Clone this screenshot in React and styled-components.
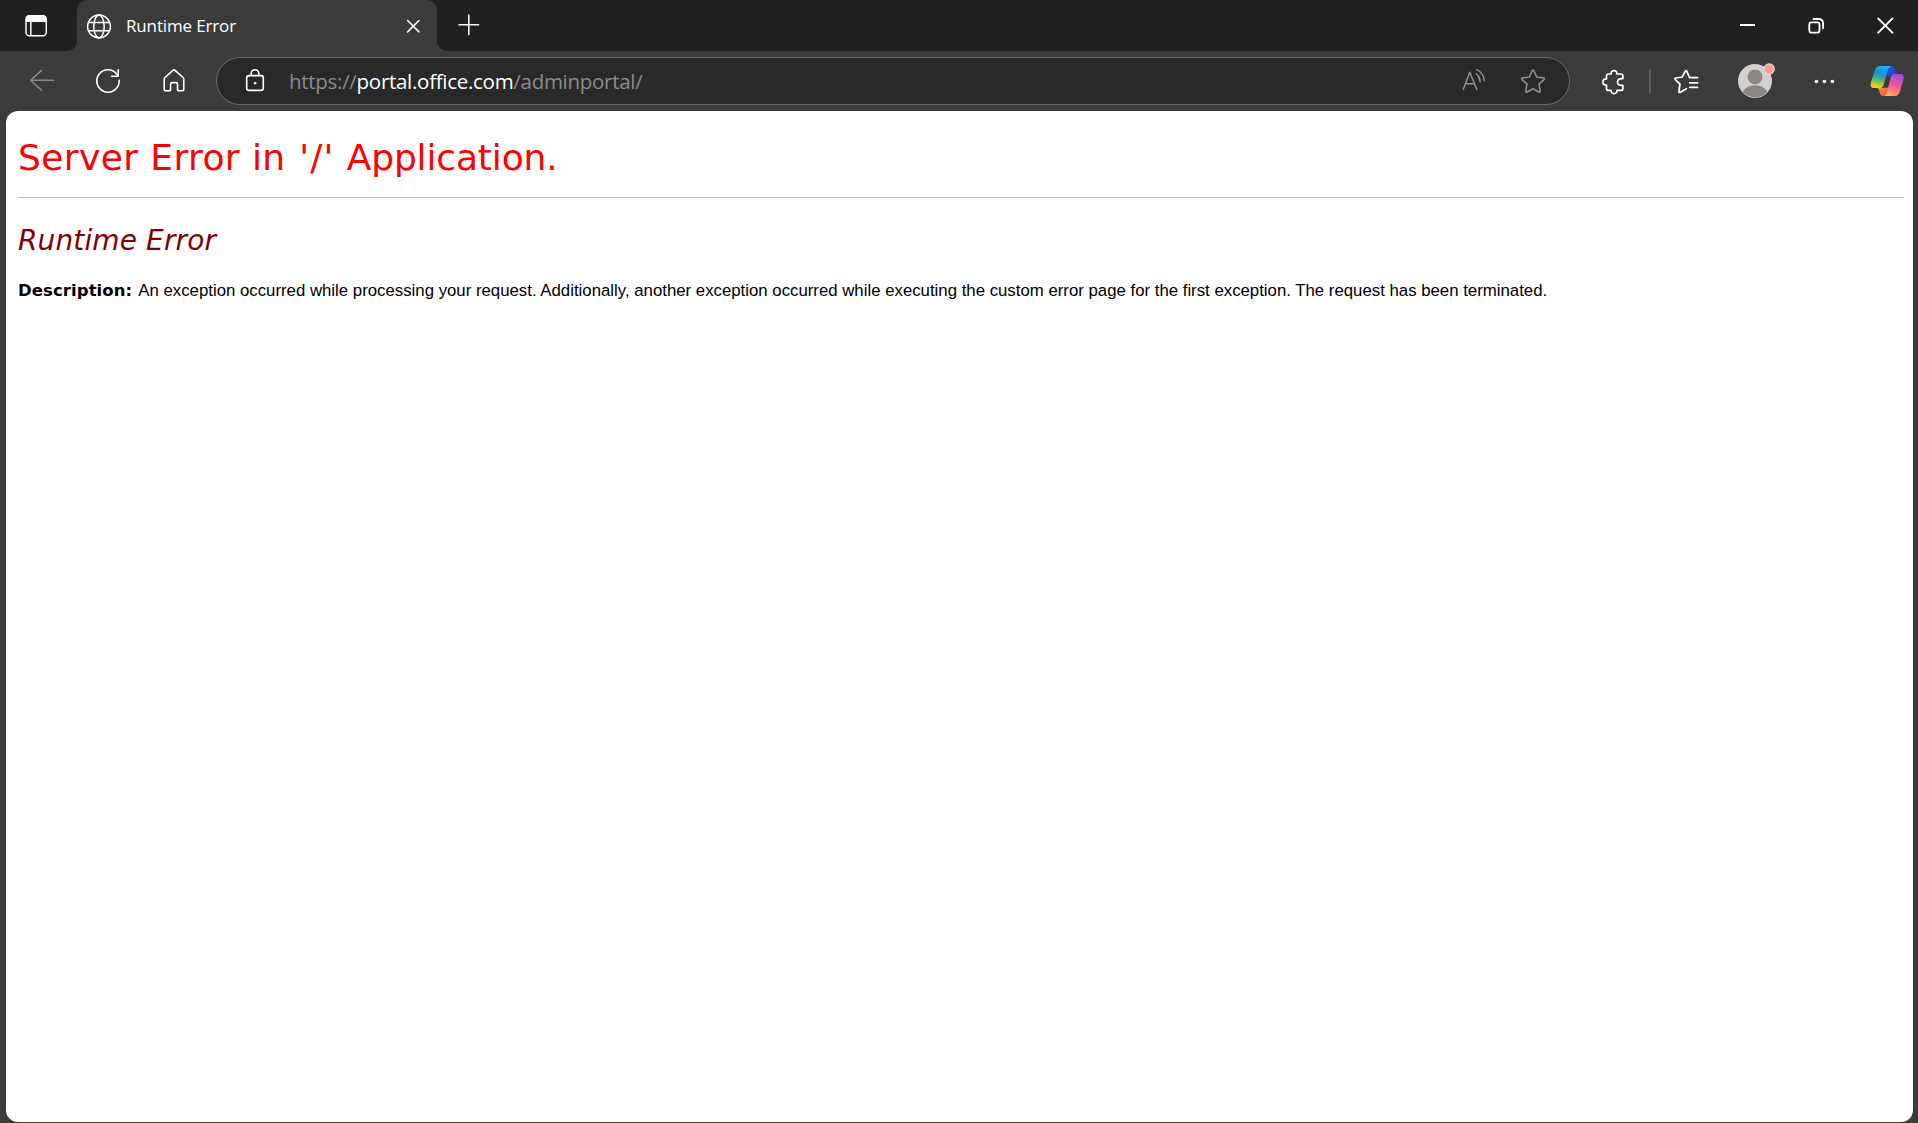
import React from "react";
import styled, { createGlobalStyle } from "styled-components";

const GlobalStyle = createGlobalStyle`
  html, body, #root { height: 100%; }
  body { margin: 0; background: #3b3b3b; overflow: hidden; }
  * { box-sizing: border-box; }
`;

const Window = styled.div`
  height: 100vh;
  display: flex;
  flex-direction: column;
  background: #3b3b3b;
  font-family: "Open Sans", "Noto Sans", sans-serif;
`;

const TabStrip = styled.header`
  height: 51px;
  flex: none;
  display: flex;
  align-items: flex-start;
  background: #202020;
`;

const StripStart = styled.div`
  width: 77px;
  height: 51px;
  padding: 11px 0 0 22px;
  background: #202020;
  border-bottom-right-radius: 10px;
`;

const TabBase = styled.div`
  display: flex;
  background: #3b3b3b;
`;

const Tab = styled.div`
  width: 360px;
  height: 51px;
  display: flex;
  align-items: center;
  padding: 0 15px 0 8px;
  background: #3b3b3b;
  border-radius: 10px 10px 0 0;
`;

const TabCorners = styled.div`
  background: linear-gradient(#202020 50%, #3b3b3b 50%);
`;

const TabTitle = styled.span`
  flex: 1;
  margin-left: 13px;
  color: #fff;
  font-size: 17px;
  line-height: 24px;
  letter-spacing: -0.15px;
  white-space: nowrap;
`;

const StripEnd = styled.div`
  flex: 1;
  height: 51px;
  display: flex;
  justify-content: space-between;
  padding: 10px 18px 0 16px;
  background: #202020;
  border-bottom-left-radius: 10px;
`;

const StripEndBase = styled.div`
  flex: 1;
  display: flex;
  background: #3b3b3b;
`;

const WindowControls = styled.div`
  display: flex;
  gap: 39px;
`;

const Toolbar = styled.nav`
  height: 60px;
  flex: none;
  display: flex;
  align-items: center;
  padding: 0 12px 0 28px;
`;

const NavButtons = styled.div`
  display: flex;
  gap: 38px;
  margin-right: 28px;
`;

const AddressBar = styled.div`
  flex: none;
  width: 1354px;
  height: 48px;
  display: flex;
  align-items: center;
  padding: 0 22px 0 24px;
  border: 1.5px solid #6a6a6a;
  border-radius: 24px;
  background: #292929;
`;

const Url = styled.span`
  flex: 1;
  margin-left: 20px;
  color: #8c8c8c;
  font-size: 20.5px;
  line-height: 30px;
  letter-spacing: -0.29px;
  font-variant-ligatures: none;
  white-space: nowrap;
`;

const UrlHost = styled.span`
  color: #fff;
`;

const AddressActions = styled.div`
  display: flex;
  gap: 31px;
`;

const Extras = styled.div`
  flex: 1;
  display: flex;
  align-items: center;
  margin-left: 29px;
`;

const Divider = styled.span`
  width: 2px;
  height: 24px;
  margin: 0 21px 0 22px;
  background: #5e5e5e;
`;

const Glyph = styled.svg`
  display: block;
  flex: none;
  margin-left: ${(p) => p.$gap || 0}px;
  fill: none;
  stroke: ${(p) => p.$color || "#fff"};
  stroke-width: ${(p) => p.$weight || 1.5};
  stroke-linecap: round;
  stroke-linejoin: round;
`;

const Icon = ({ w = 28, h = 30, children, ...rest }) => (
  <Glyph width={w} height={h} viewBox={`0 0 ${w} ${h}`} {...rest}>
    {children}
  </Glyph>
);

const Page = styled.main`
  flex: 1;
  margin: 0 5px 1px 6px;
  padding: 0 9px 0 12px;
  background: #fff;
  border-radius: 12px;
  color: #000;
`;

const ErrorTitle = styled.h1`
  margin: 0;
  padding-top: 25px;
  height: 87px;
  border-bottom: 1px solid #bdbdbd;
  color: #f00;
  font: 400 36px/44px Verdana, "DejaVu Sans", sans-serif;
  letter-spacing: 0.4px;
`;

const Tracked = styled.span`
  margin-left: ${(p) => p.$shift || 0}px;
  letter-spacing: ${(p) => p.$by}px;
`;

const ErrorKind = styled.h2`
  margin: 25px 0 0;
  color: maroon;
  font: italic 400 28px/36px Verdana, "DejaVu Sans", sans-serif;
  letter-spacing: 0.12px;
`;

const Description = styled.p`
  margin: 20px 0 0;
  font: 16.8px/24px Arial, "Liberation Sans", sans-serif;
  white-space: nowrap;
`;

const Label = styled.b`
  margin-right: 6px;
  font: 700 16.5px/24px Verdana, "DejaVu Sans", sans-serif;
  letter-spacing: 0.08px;
`;

const CopilotLogo = () => (
  <Icon w={38} $gap={30} stroke="none">
    <defs>
      <linearGradient id="cpLeft" x1="0.6" y1="0" x2="0.35" y2="1">
        <stop offset="0" stopColor="#1fb0f5" />
        <stop offset="0.35" stopColor="#1690dc" />
        <stop offset="0.6" stopColor="#3fae7c" />
        <stop offset="0.82" stopColor="#b5c830" />
        <stop offset="1" stopColor="#f6cf10" />
      </linearGradient>
      <linearGradient id="cpTop" x1="0" y1="0" x2="1" y2="1">
        <stop offset="0" stopColor="#1a62e0" />
        <stop offset="1" stopColor="#1d3fc4" />
      </linearGradient>
      <linearGradient id="cpRight" x1="0.7" y1="0" x2="0.35" y2="1">
        <stop offset="0" stopColor="#a14bea" />
        <stop offset="0.45" stopColor="#e9539f" />
        <stop offset="0.75" stopColor="#fb7a78" />
        <stop offset="1" stopColor="#fdb25e" />
      </linearGradient>
      <linearGradient id="cpLow" x1="0" y1="0" x2="1" y2="1">
        <stop offset="0" stopColor="#f9a03c" />
        <stop offset="1" stopColor="#f0453f" />
      </linearGradient>
    </defs>
    <g stroke="none">
      <path fill="url(#cpTop)" d="M18 0H23.5Q26 0 26.8 2.6L28 6.5Q28.5 8 30 8H25Q22 8 21 10.5L18 8.6Z" />
      <path fill="url(#cpLow)" d="M20.5 21.5L19.5 30H15.5Q12.6 30 11.9 27.5L11 24Q10.5 22 8.5 22H14Z" />
      <path fill="url(#cpLeft)" d="M12.5 0H23.5Q21 .5 20 3.5L15.6 19Q14.7 22 12 22H6Q1.8 22 2.8 17L6.5 5Q8 0 12.5 0Z" />
      <path fill="url(#cpRight)" d="M26 8H32.5Q36.5 8 35.6 13L31.9 25.5Q30.6 30 26.5 30H16Q18 29.5 18.8 26.5L22.8 11Q23.6 8 26 8Z" />
    </g>
  </Icon>
);

export default function App() {
  return (
    <Window>
      <GlobalStyle />
      <TabStrip>
        <TabBase>
          <StripStart>
            <Icon w={28} h={28}>
              <rect x="4" y="4.8" width="20.3" height="20" rx="3.6" />
              <path d="M4.2 8.5Q4.2 5 7.7 5H20.6Q24.1 5 24.1 8.5V10.2H4.2Z" fill="#fff" />
              <path d="M8.8 10V24.6" />
            </Icon>
          </StripStart>
        </TabBase>
        <TabCorners>
          <Tab>
            <Icon w={28} h={28}>
              <circle cx="14" cy="14.5" r="11.4" />
              <ellipse cx="14" cy="14.5" rx="5.2" ry="11.4" />
              <path d="M3.6 10.4H24.4M3.6 18.8H24.4" />
            </Icon>
            <TabTitle>Runtime Error</TabTitle>
            <Icon w={18} h={18}>
              <path d="M3.6 3.5L15 14.9M15 3.5L3.6 14.9" />
            </Icon>
          </Tab>
        </TabCorners>
        <StripEndBase>
          <StripEnd>
            <Icon w={30} h={30}>
              <path d="M15.8 5V24.6M6 14.8H25.6" />
            </Icon>
            <WindowControls>
              <Icon w={30} h={30} $weight={2}>
                <path d="M8 15H23" strokeLinecap="butt" />
              </Icon>
              <Icon w={30} h={30} $weight={1.8}>
                <rect x="8.3" y="12.4" width="10.2" height="10.2" rx="2" />
                <path d="M12.5 9H17.5Q22.1 9 22.1 13.6V18.3" />
              </Icon>
              <Icon w={30} h={30} $weight={1.9}>
                <path d="M8.2 8.5L22.4 22.7M22.4 8.5L8.2 22.7" />
              </Icon>
            </WindowControls>
          </StripEnd>
        </StripEndBase>
      </TabStrip>

      <Toolbar>
        <NavButtons>
          <Icon $color="#8a8a8a">
            <path d="M25.6 14.3H2.6M13.6 4.4L2.6 14.3L13.6 24.4" />
          </Icon>
          <Icon $weight={1.6}>
            <path d="M25.2 14.4A11.2 11.2 0 1 1 23.6 9.2" />
            <path d="M24.2 3.8V10.2H17.6" />
          </Icon>
          <Icon $weight={1.6}>
            <path d="M4.2 13.4Q4.2 12.2 5 11.5L12.9 4.3Q14 3.4 15.1 4.3L23 11.5Q23.8 12.2 23.8 13.4V23Q23.8 24.8 22 24.8H19.2Q17.5 24.8 17.5 23V18.2Q17.5 16.6 16 16.6H12Q10.6 16.6 10.6 18.2V23Q10.6 24.8 8.9 24.8H6Q4.2 24.8 4.2 23Z" />
          </Icon>
        </NavButtons>

        <AddressBar>
          <Icon $weight={1.6}>
            <rect x="5.7" y="9.6" width="16.6" height="14.8" rx="2.4" />
            <path d="M10.2 9.4V7.6A3.8 3.8 0 0 1 17.8 7.6V9.4" />
            <circle cx="14" cy="17.2" r="0.9" fill="#fff" strokeWidth="1" />
          </Icon>
          <Url>
            https://<UrlHost>portal.office.com</UrlHost>/adminportal/
          </Url>
          <AddressActions>
            <Icon $color="#8f8f8f">
              <path d="M3.2 23.5L9.8 6.3L16.8 23.5M5.6 17.8H14.4" />
              <path d="M16.3 7.8Q19.6 10.6 20.3 15.8M16.8 3.6Q23.5 7 24.3 14.8" />
            </Icon>
            <Icon $color="#8f8f8f" $weight={1.6}>
              <path d="M13.1 4.8Q14 3.4 14.9 4.8L17.7 11L24.4 11.9Q26 12.3 24.9 13.6L20 18.2L21.2 24.9Q21.3 26.6 19.8 26L14 22.8L8.2 26Q6.7 26.6 6.8 24.9L8 18.2L3.1 13.6Q2 12.3 3.6 11.9L10.3 11Z" />
            </Icon>
          </AddressActions>
        </AddressBar>

        <Extras>
          <Icon $weight={1.7}>
            <path d="M7.5 10Q7.5 8 9.5 8H12.1Q11.9 4.6 15 4.6T17.9 8H21.9Q23.9 8 23.9 10V12.6Q18.5 12.2 18.5 16T23.9 19.4V22.4Q23.9 24.4 21.9 24.4H17.9Q18.1 27.6 15 27.6T12.1 24.4H9.5Q7.5 24.4 7.5 22.4V19.2Q3.9 19.2 3.9 16T7.5 12.8Z" />
          </Icon>
          <Divider />
          <Icon $weight={1.7}>
            <path d="M25.6 11.7H17.6L14.8 5.4Q14 4 13.2 5.4L10.2 11L3.6 12Q2.2 12.4 3.2 13.5L8 18.2L6.9 25.4Q6.9 26.8 8.2 26.2L14.4 22.8" />
            <path d="M17.8 16.8H25.6M17.8 21.3H25.6" />
          </Icon>
          <Icon w={40} h={36} $gap={36}>
            <defs>
              <clipPath id="avatarClip">
                <circle cx="19" cy="18" r="16.4" />
              </clipPath>
            </defs>
            <circle cx="19" cy="18" r="17" fill="#d2d0ce" stroke="none" />
            <g clipPath="url(#avatarClip)" fill="#8b8785" stroke="none">
              <circle cx="19" cy="13.8" r="7.4" />
              <ellipse cx="19" cy="32.5" rx="13" ry="10.2" />
            </g>
            <circle cx="33.2" cy="6" r="5.1" fill="#fa9d98" stroke="#e2dcd9" strokeWidth="1.1" />
          </Icon>
          <Icon $gap={34}>
            <g fill="#fff" stroke="none">
              <circle cx="6.4" cy="15.5" r="1.8" />
              <circle cx="14.4" cy="15.5" r="1.8" />
              <circle cx="22.4" cy="15.5" r="1.8" />
            </g>
          </Icon>
          <CopilotLogo />
        </Extras>
      </Toolbar>

      <Page>
        <ErrorTitle>
          Server Error in <Tracked $by={1} $shift={2}>'/' </Tracked>
          <Tracked $by={-0.15}>Application.</Tracked>
        </ErrorTitle>
        <ErrorKind>Runtime Error</ErrorKind>
        <Description>
          <Label>Description:</Label>
          An exception occurred while processing your request. Additionally, another exception occurred while executing the custom error page for the first exception. The request has been terminated.
        </Description>
      </Page>
    </Window>
  );
}
